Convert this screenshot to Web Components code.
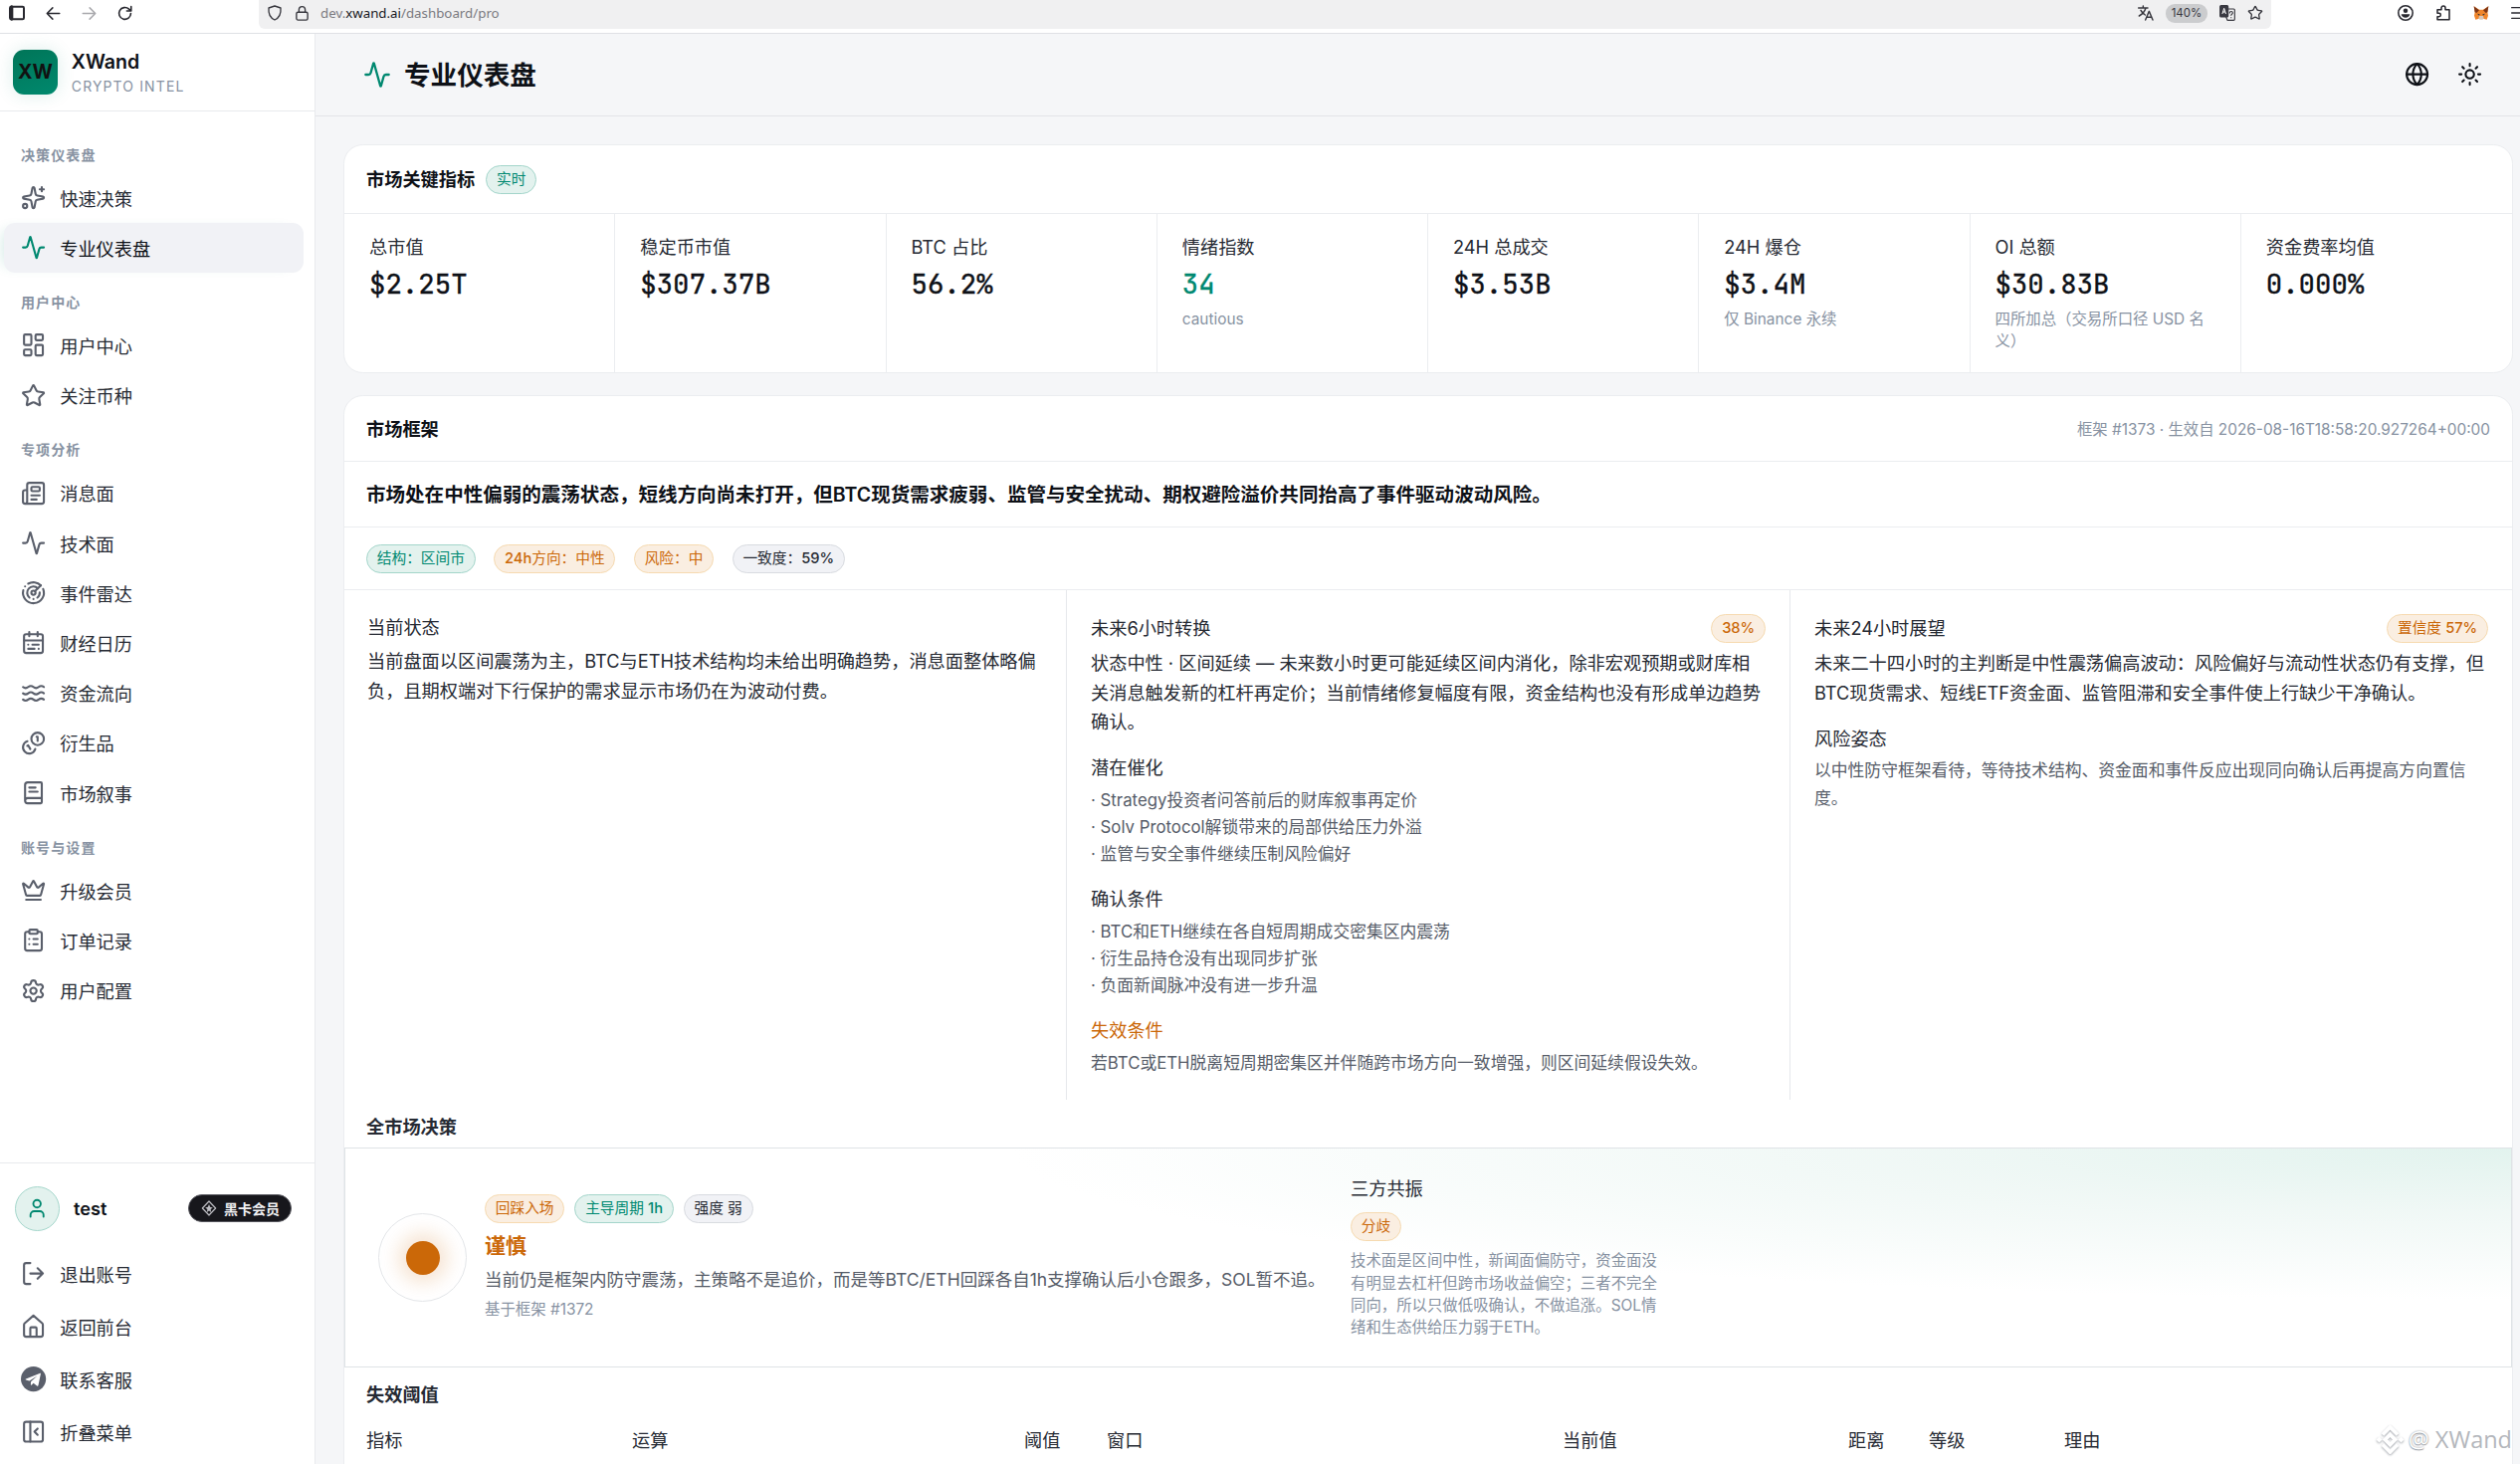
<!DOCTYPE html>
<html lang="zh-CN">
<head>
<meta charset="utf-8">
<title>XWand</title>
<style>
  html, body { margin: 0; height: 100%; overflow: hidden; }
  body {
    --teal: #008870;
    --orange: #cb6808;
    --line: #ebedf0;
    --muted: #8792a2;
    --soft: #565c68;
    --text: #262a33;
    --strong: #0e1117;
    font-family: Inter, "Noto Sans CJK SC", sans-serif;
    font-size: 18.2px;
    color: var(--text);
    background: #f5f6f8;
  }
</style>
</head>
<body>
<app-shell>
  <browser-bar slot="browser"></browser-bar>
  <side-bar slot="side">
    <nav-section label="决策仪表盘">
      <nav-item icon="sparkles">快速决策</nav-item>
      <nav-item icon="activity" active>专业仪表盘</nav-item>
    </nav-section>
    <nav-section label="用户中心">
      <nav-item icon="dashboard">用户中心</nav-item>
      <nav-item icon="star">关注币种</nav-item>
    </nav-section>
    <nav-section label="专项分析">
      <nav-item icon="news">消息面</nav-item>
      <nav-item icon="activity">技术面</nav-item>
      <nav-item icon="radar">事件雷达</nav-item>
      <nav-item icon="calendar">财经日历</nav-item>
      <nav-item icon="waves">资金流向</nav-item>
      <nav-item icon="coins">衍生品</nav-item>
      <nav-item icon="book">市场叙事</nav-item>
    </nav-section>
    <nav-section label="账号与设置">
      <nav-item icon="crown">升级会员</nav-item>
      <nav-item icon="clipboard">订单记录</nav-item>
      <nav-item icon="settings">用户配置</nav-item>
    </nav-section>
    <nav-item slot="foot" tall icon="logout">退出账号</nav-item>
    <nav-item slot="foot" tall icon="house">返回前台</nav-item>
    <nav-item slot="foot" tall icon="telegram">联系客服</nav-item>
    <nav-item slot="foot" tall icon="collapse">折叠菜单</nav-item>
  </side-bar>
  <page-header>专业仪表盘</page-header>
  <main-content></main-content>
</app-shell>

<script>
const icons = {
  sparkles: '<path d="M11.017 2.814a1 1 0 0 1 1.966 0l1.051 5.558a2 2 0 0 0 1.594 1.594l5.558 1.051a1 1 0 0 1 0 1.966l-5.558 1.051a2 2 0 0 0-1.594 1.594l-1.051 5.558a1 1 0 0 1-1.966 0l-1.051-5.558a2 2 0 0 0-1.594-1.594l-5.558-1.051a1 1 0 0 1 0-1.966l5.558-1.051a2 2 0 0 0 1.594-1.594z"/><path d="M20 2v4M22 4h-4"/><circle cx="4" cy="20" r="2"/>',
  activity: '<path d="M22 12h-2.48a2 2 0 0 0-1.93 1.46l-2.35 8.36a.25.25 0 0 1-.48 0L9.24 2.18a.25.25 0 0 0-.48 0l-2.35 8.36A2 2 0 0 1 4.49 12H2"/>',
  dashboard: '<rect x="3" y="2" width="7" height="10" rx="1"/><rect x="14" y="2" width="7" height="5.500" rx="1"/><rect x="14" y="12" width="7" height="10" rx="1"/><rect x="3" y="16.500" width="7" height="5.500" rx="1"/>',
  star: '<path d="M11.525 2.295a.53.53 0 0 1 .95 0l2.31 4.679a2.123 2.123 0 0 0 1.595 1.16l5.166.756a.53.53 0 0 1 .294.904l-3.736 3.638a2.123 2.123 0 0 0-.611 1.878l.882 5.14a.53.53 0 0 1-.771.56l-4.618-2.428a2.122 2.122 0 0 0-1.973 0L6.396 21.01a.53.53 0 0 1-.77-.56l.881-5.139a2.122 2.122 0 0 0-.611-1.879L2.16 9.795a.53.53 0 0 1 .294-.906l5.165-.755a2.122 2.122 0 0 0 1.597-1.16z"/>',
  news: '<path d="M15 18h-5M18 14h-8M4 22h16a2 2 0 0 0 2-2V4a2 2 0 0 0-2-2H8a2 2 0 0 0-2 2v16a2 2 0 0 1-4 0v-9a2 2 0 0 1 2-2h2"/><rect x="10" y="6" width="8" height="4" rx="1"/>',
  radar: '<path d="M19.07 4.93A10 10 0 0 0 6.99 3.34M4 6h.01M2.29 9.62A10 10 0 1 0 21.31 8.35M16.24 7.76A6 6 0 1 0 8.23 16.67M12 18h.01M17.99 11.66A6 6 0 0 1 15.77 16.67"/><circle cx="12" cy="12" r="2"/><path d="m13.41 10.59 5.66-5.66"/>',
  calendar: '<rect x="3" y="4" width="18" height="18" rx="2"/><path d="M16 2v4M3 10h18M8 2v4M17 14h-6M13 18H7M7 14h.01M17 18h.01"/>',
  waves: '<path d="M2 6c.6.5 1.2 1 2.5 1C7 7 7 5 9.5 5c2.6 0 2.4 2 5 2 2.5 0 2.5-2 5-2 1.3 0 1.9.5 2.5 1M2 12c.6.5 1.2 1 2.5 1 2.5 0 2.5-2 5-2 2.6 0 2.4 2 5 2 2.5 0 2.5-2 5-2 1.3 0 1.9.5 2.5 1M2 18c.6.5 1.2 1 2.5 1 2.5 0 2.5-2 5-2 2.6 0 2.4 2 5 2 2.5 0 2.5-2 5-2 1.3 0 1.9.5 2.5 1"/>',
  coins: '<path d="M13.744 17.736a6 6 0 1 1-7.48-7.48M15 6h1v4M6.134 14.768l.866-.5 2 3.464"/><circle cx="16" cy="8" r="6"/>',
  book: '<path d="M4 19.5v-15A2.5 2.5 0 0 1 6.5 2H19a1 1 0 0 1 1 1v18a1 1 0 0 1-1 1H6.5a1 1 0 0 1 0-5H20M8 11h8M8 7h6"/>',
  crown: '<path d="M11.562 3.266a.5.5 0 0 1 .876 0L15.39 8.87a1 1 0 0 0 1.516.294L21.183 5.5a.5.5 0 0 1 .798.519l-2.834 10.246a1 1 0 0 1-.956.734H5.81a1 1 0 0 1-.957-.734L2.02 6.02a.5.5 0 0 1 .798-.519l4.276 3.664a1 1 0 0 0 1.516-.294zM5 21h14"/>',
  clipboard: '<rect x="8" y="2" width="8" height="4" rx="1"/><path d="M16 4h2a2 2 0 0 1 2 2v14a2 2 0 0 1-2 2H6a2 2 0 0 1-2-2V6a2 2 0 0 1 2-2h2M12 11h4M12 16h4M8 11h.01M8 16h.01"/>',
  settings: '<path d="M9.671 4.136a2.34 2.34 0 0 1 4.659 0 2.34 2.34 0 0 0 3.319 1.915 2.34 2.34 0 0 1 2.33 4.033 2.34 2.34 0 0 0 0 3.831 2.34 2.34 0 0 1-2.33 4.033 2.34 2.34 0 0 0-3.319 1.915 2.34 2.34 0 0 1-4.659 0 2.34 2.34 0 0 0-3.32-1.915 2.34 2.34 0 0 1-2.33-4.033 2.34 2.34 0 0 0 0-3.831A2.34 2.34 0 0 1 6.35 6.051a2.34 2.34 0 0 0 3.319-1.915"/><circle cx="12" cy="12" r="3"/>',
  logout: '<path d="M9 22H5a2 2 0 0 1-2-2V4a2 2 0 0 1 2-2h4M16 17l5-5-5-5M21 12H9"/>',
  house: '<path d="M15 22v-8a1 1 0 0 0-1-1h-4a1 1 0 0 0-1 1v8M3 10.5a2 2 0 0 1 .7-1.5L12 1.8 20.3 9a2 2 0 0 1 .7 1.5V20a2 2 0 0 1-2 2H5a2 2 0 0 1-2-2z"/>',
  telegram: '<circle cx="12" cy="12" r="12" fill="currentColor" stroke="none"/><path d="M4.8 12 17.9 6.6c.7-.3 1.2.1 1 .9l-2.2 10.400c-.2.8-.7 1-1.300.6l-3.400-2.500-1.700 1.600c-.5.4-.9.3-.9-.4l.2-2.600 6-5.500-7.500 4.700-3.200-1c-.7-.2-.7-.6-.1-.8z" fill="#fff" stroke="none"/>',
  collapse: '<rect x="3" y="2.500" width="18" height="19" rx="2"/><path d="M9 2.500v19M16 15l-3-3 3-3"/>',
  user: '<path d="M19 21v-2a4 4 0 0 0-4-4H9a4 4 0 0 0-4 4v2"/><circle cx="12" cy="7" r="4"/>',
  globe: '<circle cx="12" cy="12" r="10"/><path d="M12 2a14.500 14.500 0 0 0 0 20 14.500 14.500 0 0 0 0-20M2 12h20"/>',
  sun: '<circle cx="12" cy="12" r="4"/><path d="M12 2v2M12 20v2M4.930 4.930l1.410 1.410M17.660 17.660l1.410 1.410M2 12h2M20 12h2M6.340 17.660l-1.410 1.410M19.070 4.930l-1.410 1.410"/>',
  gem: '<path d="M12 1.500 22 12 12 22.500 2 12z"/><path d="m12 6 1.700 4 4 1.200-3.200 2.400.6 4.400-3.100-2.300L8.900 18l.6-4.400-3.200-2.400 4-1.200z" fill="currentColor" stroke="none"/>',
  /* browser chrome */
  panel: '<rect x="1.500" y="2.500" width="21" height="19" rx="2" stroke-width="3"/><path d="M4 3v18" stroke-width="5"/>',
  back: '<path d="M22 12H2M11 3l-9 9 9 9"/>',
  forward: '<path d="M2 12h20M13 3l9 9-9 9"/>',
  reload: '<path d="M21.500 12a9.500 9.500 0 1 1-3-7L22 8M22 1v7h-7"/>',
  shield: '<path d="M12 1.500 21 4.500c.8 9-2.500 15-9 18-6.500-3-9.800-9-9-18z"/>',
  lock: '<rect x="3" y="10" width="18" height="12.500" rx="2.500"/><path d="M7 10V6a5 5 0 0 1 10 0v4"/>',
  translate: '<path d="M1 4.500h14M8 1.500v3M12 4.500c-1.500 5-5 9-10 12M4.500 8c1.500 3 3.500 5 6.500 7M11.500 22.500l5.500-13 5.500 13M13.500 18.500h7"/>',
  pages: '<rect x="1" y="1" width="12" height="17" rx="1.500" fill="#3a3a42"/><path d="m4.500 13 2.500-8 2.500 8M5.500 10.500h3" stroke="#fff" stroke-width="1.500"/><path d="M13 6h8.500a1.500 1.500 0 0 1 1.500 1.500v14a1.500 1.500 0 0 1-1.500 1.500H12l-2-5M15.500 12c0-3 4.500-3 4.500 0 0 1.800-2.300 1.800-2.300 3.500M17.700 19v.2"/>',
  account: '<circle cx="12" cy="12" r="10.800"/><circle cx="12" cy="8.700" r="3.400" fill="currentColor" stroke="none"/><path d="M5.500 14h13c-.5 3.500-3 5-6.500 5s-6-1.500-6.500-5z" fill="currentColor" stroke="none"/>',
  puzzle: '<path d="M3 22V17.500h2.500a2.500 2.500 0 0 0 0-5H3V7h6V4.500a3 3 0 0 1 6 0V7h6v15z"/>',
  menu: '<path d="M1 4h22M1 12h22M1 20h22"/>',
  fox: '<g stroke="none"><path d="M1 2l8 5h6l8-5-1.500 9 1 5-2 6-5.500-1.500h-6L3.500 22l-2-6 1-5z" fill="#f0852a"/><path d="M1 2l8 6-4 4-2.500-1zM23 2l-8 6 4 4 2.500-1z" fill="#7d3516"/><path d="M9 16.500h6l1 4-2 1.500h-4l-2-1.500z" fill="#d9c7b8"/><path d="M6 13l4 1-1 2zM18 13l-4 1 1 2z" fill="#30343b"/></g>'
};

class UiIcon extends HTMLElement {
  connectedCallback() {
    const size = this.getAttribute('size') || 25.2;
    const stroke = this.getAttribute('stroke') || 2;
    this.attachShadow({mode: 'open'}).innerHTML = `
    <style>
      :host { display: block; flex: none; width: ${size}px; height: ${size}px; }
      svg { display: block; overflow: visible; }
    </style>
    <svg width="${size}" height="${size}" viewBox="0 0 24 24" fill="none" stroke="currentColor"
      stroke-width="${stroke}" stroke-linecap="round" stroke-linejoin="round">${icons[this.getAttribute('name')]}</svg>`;
  }
}

class AppShell extends HTMLElement {
  constructor() {
    super();
    this.attachShadow({mode: 'open'}).innerHTML = `
    <style>
      :host { display: flex; flex-direction: column; height: 100vh; overflow: hidden; }
      .body { flex: 1; display: flex; min-height: 0; }
      .page { flex: 1; min-width: 0; display: flex; flex-direction: column; overflow: hidden; }
    </style>
    <slot name="browser"></slot>
    <div class="body">
      <slot name="side"></slot>
      <div class="page"><slot></slot></div>
    </div>`;
  }
}

class BrowserBar extends HTMLElement {
  constructor() {
    super();
    this.attachShadow({mode: 'open'}).innerHTML = `
    <style>
      :host {
        display: flex; height: 33px; flex: none; box-sizing: content-box;
        background: #fff; border-bottom: 1px solid #dfe1e5; color: #28282f;
        font: 13.3px "Noto Sans", "Open Sans", sans-serif;
      }
      .tools { display: flex; align-items: center; height: 26px; width: 251px; padding-left: 9px; }
      .tools ui-icon + ui-icon { margin-left: 21px; }
      .off { color: #a9a9ad; }
      .url {
        display: flex; align-items: center; width: 2022px; height: 29px; box-sizing: border-box;
        padding: 0 8px 3px 8px; background: #f0f0f1; border-radius: 0 0 6px 6px; color: #37373e;
      }
      .url .addr { margin-left: 11px; color: #7a7a80; }
      .addr b { font-weight: 400; color: #18181e; }
      .end { margin-left: auto; display: flex; align-items: center; gap: 12px; }
      .zoom {
        width: 42px; height: 19px; border-radius: 9px; text-align: center;
        background: #cbccce; font: 11.5px/19px Inter, sans-serif;
      }
      .ext { display: flex; align-items: center; height: 26px; gap: 22px; margin-left: 127px; width: 123px; overflow: hidden; }
    </style>
    <div class="tools">
      <ui-icon name="panel" size="16"></ui-icon>
      <ui-icon name="back" size="15" stroke="2.4"></ui-icon>
      <ui-icon name="forward" class="off" size="15" stroke="2.4"></ui-icon>
      <ui-icon name="reload" size="15" stroke="2.6"></ui-icon>
    </div>
    <div class="url">
      <ui-icon name="shield" size="16" stroke="2"></ui-icon>
      <ui-icon name="lock" size="15" stroke="2.2" style="margin-left:12px"></ui-icon>
      <span class="addr">dev.<b>xwand.ai</b>/dashboard/pro</span>
      <div class="end">
        <ui-icon name="translate" size="16" stroke="2.2"></ui-icon>
        <span class="zoom">140%</span>
        <ui-icon name="pages" size="16" stroke="1.700"></ui-icon>
        <ui-icon name="star" size="16" stroke="2"></ui-icon>
      </div>
    </div>
    <div class="ext">
      <ui-icon name="account" size="16" stroke="2.3"></ui-icon>
      <ui-icon name="puzzle" size="16" stroke="2.3"></ui-icon>
      <ui-icon name="fox" size="16"></ui-icon>
      <ui-icon name="menu" size="16" stroke="2"></ui-icon>
    </div>`;
  }
}

class SideBar extends HTMLElement {
  constructor() {
    super();
    this.attachShadow({mode: 'open'}).innerHTML = `
    <style>
      :host {
        display: flex; flex-direction: column; width: 316px; flex: none;
        background: #fff; border-right: 1px solid #e8eaed;
      }
      .brand {
        display: flex; align-items: center; gap: 14px; height: 78px; flex: none;
        padding: 0 13px; border-bottom: 1px solid #e8eaed; box-sizing: border-box;
      }
      .logo {
        width: 44.8px; height: 44.8px; border-radius: 11px; text-align: center;
        font: 700 19.600px/45px Inter, sans-serif; color: #111;
        background: linear-gradient(160deg, #007558, #00896e);
        box-shadow: 0 0 18px rgba(0, 136, 112, .14);
      }
      .name { padding-top: 2px; font-weight: 600; font-size: 19.6px; line-height: 26px; color: var(--strong); }
      .sub { font-size: 14px; line-height: 23px; letter-spacing: 1.12px; color: #8792a2; }
      nav { flex: 1; padding: 25.6px 11px 0 4px; }
      .foot { border-top: 1px solid #e8eaed; height: 303px; box-sizing: border-box; padding: 17px 12px 0 4px; }
      .me { display: flex; align-items: center; height: 56px; margin-bottom: 11px; padding: 0 11px; }
      .avatar {
        width: 45px; height: 45px; box-sizing: border-box; border: 1px solid #a5d7cc; border-radius: 50%;
        background: #e3f2ee; color: var(--teal); display: grid; place-items: center;
      }
      .who { margin-left: 14px; font-weight: 600; font-size: 18.2px; color: var(--strong); }
      .tier {
        margin-left: auto; display: flex; align-items: center; gap: 7px; height: 28px; width: 104px;
        box-sizing: border-box; border: 1px solid #55555c; padding: 0 12px; border-radius: 14px;
        background: #17171c; color: #f1f1f3; font-size: 14px; font-weight: 600; white-space: nowrap;
      }
      .tier ui-icon { color: #bdbdc3; }
    </style>
    <div class="brand">
      <div class="logo">XW</div>
      <div><div class="name">XWand</div><div class="sub">CRYPTO INTEL</div></div>
    </div>
    <nav><slot></slot></nav>
    <div class="foot">
      <div class="me">
        <div class="avatar"><ui-icon name="user" size="22.4"></ui-icon></div>
        <span class="who">test</span>
        <span class="tier"><ui-icon name="gem" size="16" stroke="1.800"></ui-icon>黑卡会员</span>
      </div>
      <slot name="foot"></slot>
    </div>`;
  }
}

class NavSection extends HTMLElement {
  constructor() {
    super();
    this.attachShadow({mode: 'open'});
  }
  connectedCallback() {
    this.shadowRoot.innerHTML = `
    <style>
      :host { display: block; margin-bottom: 12px; }
      .label {
        height: 36px; line-height: 36px; padding-left: 17px; font-size: 14px;
        font-weight: 600; letter-spacing: 1.12px; color: var(--muted);
      }
    </style>
    <div class="label">${this.getAttribute('label')}</div>
    <slot></slot>`;
  }
}

class NavItem extends HTMLElement {
  constructor() {
    super();
    this.attachShadow({mode: 'open'});
  }
  connectedCallback() {
    this.shadowRoot.innerHTML = `
    <style>
      :host {
        display: flex; align-items: center; gap: 14px; height: 50.2px; padding-left: 17px;
        border-radius: 11px; color: var(--text);
      }
      :host([tall]) { height: 53px; }
      ui-icon { color: #5a5f6b; }
      :host([active]) { background: #f1f2f6; color: var(--strong); box-shadow: -8px 0 14px -8px rgba(0, 136, 112, .2); }
      :host([active]) ui-icon { color: var(--teal); }
    </style>
    <ui-icon name="${this.getAttribute('icon')}"></ui-icon>
    <slot></slot>`;
  }
}

class PageHeader extends HTMLElement {
  constructor() {
    super();
    this.attachShadow({mode: 'open'}).innerHTML = `
    <style>
      :host {
        display: flex; align-items: center; height: 83px; flex: none; box-sizing: border-box;
        padding: 0 37.5px 0 48px; border-bottom: 1px solid #e2e4e8; color: var(--strong);
      }
      h1 { margin: 0 auto 0 13px; font-size: 26.6px; font-weight: 600; line-height: 40px; }
      .mark { color: var(--teal); }
      .actions { display: flex; gap: 28px; }
    </style>
    <ui-icon class="mark" name="activity" size="28"></ui-icon>
    <h1><slot></slot></h1>
    <div class="actions">
      <ui-icon name="globe"></ui-icon>
      <ui-icon name="sun"></ui-icon>
    </div>`;
  }
}

class StatusChip extends HTMLElement {
  constructor() {
    super();
    this.attachShadow({mode: 'open'}).innerHTML = `
    <style>
      :host {
        display: inline-block; flex: none; box-sizing: border-box; height: 29px; padding: 0 9.8px;
        border: 1px solid #d8dbe0; border-radius: 15px; background: #f1f2f6; color: var(--text);
        font-size: 14.7px; font-weight: 400; line-height: 27px; white-space: nowrap;
      }
      :host([tone="teal"]) { background: #e3f2ee; border-color: #a3d5ca; color: var(--teal); }
      :host([tone="orange"]) { background: #faeee1; border-color: #f6dab0; color: var(--orange); }
      ::slotted(b) { font-weight: 500; }
    </style>
    <slot></slot>`;
  }
}

class StatCell extends HTMLElement {
  constructor() {
    super();
    this.attachShadow({mode: 'open'});
  }
  connectedCallback() {
    this.shadowRoot.innerHTML = `
    <style>
      :host { display: block; padding: 20px 23px 0 25px; border-right: 1px solid var(--line); box-sizing: border-box; }
      :host(:last-child) { border-right: 0; }
      .label { line-height: 27px; }
      .value {
        font: 400 27.4px/36px "JetBrains Mono", "DejaVu Sans Mono", monospace;
        -webkit-text-stroke: .4px; color: var(--strong); margin-top: 5px;
      }
      :host([tone]) .value { color: var(--teal); }
      .note { margin-top: 7px; font-size: 15.4px; line-height: 22.4px; color: var(--muted); }
    </style>
    <div class="label">${this.getAttribute('label')}</div>
    <div class="value">${this.getAttribute('value')}</div>
    <div class="note"><slot></slot></div>`;
  }
}

class PanelCard extends HTMLElement {
  constructor() {
    super();
    this.attachShadow({mode: 'open'}).innerHTML = `
    <style>
      :host {
        display: block; flex: none; box-sizing: border-box; background: #fff;
        border: 1px solid var(--line); border-radius: 19.6px; overflow: hidden;
      }
      header {
        display: flex; align-items: center; height: var(--head, 69px); box-sizing: border-box;
        padding: 0 22px; border-bottom: 1px solid var(--line);
      }
      h2 { margin: 0 11px 2px 0; font-size: 18.2px; font-weight: 600; color: var(--strong); }
    </style>
    <header><h2><slot name="title"></slot></h2><slot name="extra"></slot></header>
    <slot></slot>`;
  }
}

class OutlookColumn extends HTMLElement {
  constructor() {
    super();
    this.attachShadow({mode: 'open'}).innerHTML = `
    <style>
      :host {
        display: block; box-sizing: border-box; padding: 24px 24px 0; height: 512px;
        border-left: 1px solid #e6e8eb;
      }
      :host(:first-child) { border-left: 0; padding-left: 23px; }
      .head { display: flex; align-items: center; justify-content: space-between; min-height: 27px; line-height: 27px; }
      ::slotted(p) { margin: 6px 0 0; line-height: 29.6px; }
      ::slotted(h4) { margin: 17.400px 0 5.800px; font-size: 18.2px; font-weight: 400; line-height: 27px; }
      ::slotted(h4[warn]) { color: var(--orange); }
      ::slotted(div) { font-size: 16.8px; line-height: 27.200px; color: var(--soft); }
    </style>
    <div class="head"><slot name="title"></slot><slot name="chip"></slot></div>
    <slot></slot>`;
  }
}

class DecisionPanel extends HTMLElement {
  constructor() {
    super();
    this.attachShadow({mode: 'open'}).innerHTML = `
    <style>
      :host {
        display: flex; align-items: center; height: 221px; box-sizing: border-box; padding-left: 33px;
        border: 1px solid #dfe3e6;
        background: radial-gradient(ellipse at 100% 0, #e2f3ee, rgba(236, 246, 243, .8) 20%, rgba(255, 255, 255, 0) 49%);
      }
      .orb {
        width: 89px; height: 89px; box-sizing: border-box; border: 1px solid #e3e5e8; border-radius: 50%;
        display: grid; place-items: center; background: #fff; flex: none;
      }
      .orb i { width: 34px; height: 34px; border-radius: 50%; background: var(--orange); box-shadow: 0 0 20px 7px rgba(203, 104, 8, .2); }
      .call { width: 852px; margin-left: 18px; }
      .chips { display: flex; gap: 10px; }
      .title { margin-top: 7px; font-size: 21px; font-weight: 600; line-height: 32px; color: var(--orange); }
      .text { margin-top: 4px; font-size: 17.5px; line-height: 28px; color: var(--soft); white-space: nowrap; }
      .base { margin-top: 5px; font-size: 15.4px; line-height: 22px; color: var(--muted); }
      .sync { margin-left: 18px; width: 312px; }
      .sync h4 { margin: 0 0 10px; font-size: 18.2px; font-weight: 400; line-height: 27px; }
      .sync p { margin: 9px 0 0; font-size: 15.4px; line-height: 22.300px; color: var(--muted); }
      .sync status-chip { display: block; width: fit-content; }
    </style>
    <div class="orb"><i></i></div>
    <div class="call">
      <div class="chips">
        <status-chip tone="orange">回踩入场</status-chip>
        <status-chip tone="teal">主导周期 <b>1h</b></status-chip>
        <status-chip>强度 弱</status-chip>
      </div>
      <div class="title">谨慎</div>
      <div class="text">当前仍是框架内防守震荡，主策略不是追价，而是等BTC/ETH回踩各自1h支撑确认后小仓跟多，SOL暂不追。</div>
      <div class="base">基于框架 #1372</div>
    </div>
    <div class="sync">
      <h4>三方共振</h4>
      <status-chip tone="orange">分歧</status-chip>
      <p>技术面是区间中性，新闻面偏防守，资金面没有明显去杠杆但跨市场收益偏空；三者不完全同向，所以只做低吸确认，不做追涨。SOL情绪和生态供给压力弱于ETH。</p>
    </div>`;
  }
}

class WaterMark extends HTMLElement {
  constructor() {
    super();
    this.attachShadow({mode: 'open'}).innerHTML = `
    <style>
      :host {
        position: absolute; right: 8px; bottom: 9px; display: flex; align-items: center; gap: 4px;
        font: 23.5px/32px "Open Sans", "Noto Sans", sans-serif; color: #b4b7bc; white-space: nowrap;
      }
      svg { filter: drop-shadow(0 1px 1px #a4a8ae); }
      .at { color: #fff; text-shadow: 0 0 2px #84888f, 0 1px 1px #a4a8ae; }
    </style>
    <svg width="29" height="29" viewBox="0 0 29 29" fill="none" stroke="#fff" stroke-width="3.800">
      <path d="M7 9.500 14.500 2 22 9.500M7 19.500l7.500 7.500 7.500-7.500M14.500 9.500l5 5-5 5-5-5z"/>
      <path d="M3.500 11.500l3 3-3 3-3-3zM25.500 11.500l3 3-3 3-3-3z" fill="#fff" stroke="none"/>
    </svg>
    <span><span class="at">@</span> XWand</span>`;
  }
}

class MainContent extends HTMLElement {
  constructor() {
    super();
    this.attachShadow({mode: 'open'}).innerHTML = `
    <style>
      :host { display: flex; flex-direction: column; gap: 22px; padding: 28px 7px 0 28px; }
      .stats { display: grid; grid-template-columns: repeat(8, 1fr); height: 159px; }
      .stamp { margin: 0 0 2px auto; font-size: 15.36px; color: var(--muted); }
      .frame { --head: 66px; height: 1120px; }
      .lead {
        height: 66px; box-sizing: border-box; padding: 0 22px; line-height: 66px;
        border-bottom: 1px solid var(--line); font-size: 19.55px; font-weight: 600; color: var(--strong);
      }
      .chips { display: flex; align-items: center; gap: 18.4px; height: 63px; box-sizing: border-box; padding: 0 22px; border-bottom: 1px solid var(--line); }
      .cols { display: grid; grid-template-columns: 725px 727px 1fr; }
      h3 { margin: 0; height: 48px; box-sizing: border-box; padding: 7px 22px 0; font-size: 18.2px; font-weight: 600; line-height: 41px; }
      .table { display: grid; grid-template-columns: 267px 394px 83px 458px 287px 81px 136px 1fr; padding-left: 22px; line-height: 50px; }
    </style>
    <panel-card>
      <span slot="title">市场关键指标</span>
      <status-chip slot="extra" tone="teal">实时</status-chip>
      <div class="stats">
        <stat-cell label="总市值" value="$2.25T"></stat-cell>
        <stat-cell label="稳定币市值" value="$307.37B"></stat-cell>
        <stat-cell label="BTC 占比" value="56.2%"></stat-cell>
        <stat-cell label="情绪指数" value="34" tone="teal">cautious</stat-cell>
        <stat-cell label="24H 总成交" value="$3.53B"></stat-cell>
        <stat-cell label="24H 爆仓" value="$3.4M">仅 Binance 永续</stat-cell>
        <stat-cell label="OI 总额" value="$30.83B">四所加总（交易所口径 USD 名义）</stat-cell>
        <stat-cell label="资金费率均值" value="0.000%"></stat-cell>
      </div>
    </panel-card>
    <panel-card class="frame">
      <span slot="title">市场框架</span>
      <span slot="extra" class="stamp">框架 #1373 · 生效自 2026-08-16T18:58:20.927264+00:00</span>
      <div class="lead">市场处在中性偏弱的震荡状态，短线方向尚未打开，但BTC现货需求疲弱、监管与安全扰动、期权避险溢价共同抬高了事件驱动波动风险。</div>
      <div class="chips">
        <status-chip tone="teal">结构：区间市</status-chip>
        <status-chip tone="orange"><b>24h</b>方向：中性</status-chip>
        <status-chip tone="orange">风险：中</status-chip>
        <status-chip>一致度：<b>59%</b></status-chip>
      </div>
      <div class="cols">
        <outlook-column>
          <span slot="title">当前状态</span>
          <p>当前盘面以区间震荡为主，BTC与ETH技术结构均未给出明确趋势，消息面整体略偏负，且期权端对下行保护的需求显示市场仍在为波动付费。</p>
        </outlook-column>
        <outlook-column>
          <span slot="title">未来6小时转换</span>
          <status-chip slot="chip" tone="orange"><b>38%</b></status-chip>
          <p>状态中性 · 区间延续 — 未来数小时更可能延续区间内消化，除非宏观预期或财库相关消息触发新的杠杆再定价；当前情绪修复幅度有限，资金结构也没有形成单边趋势确认。</p>
          <h4>潜在催化</h4>
          <div>· Strategy投资者问答前后的财库叙事再定价</div>
          <div>· Solv Protocol解锁带来的局部供给压力外溢</div>
          <div>· 监管与安全事件继续压制风险偏好</div>
          <h4>确认条件</h4>
          <div>· BTC和ETH继续在各自短周期成交密集区内震荡</div>
          <div>· 衍生品持仓没有出现同步扩张</div>
          <div>· 负面新闻脉冲没有进一步升温</div>
          <h4 warn>失效条件</h4>
          <div>若BTC或ETH脱离短周期密集区并伴随跨市场方向一致增强，则区间延续假设失效。</div>
        </outlook-column>
        <outlook-column>
          <span slot="title">未来24小时展望</span>
          <status-chip slot="chip" tone="orange">置信度 <b>57%</b></status-chip>
          <p>未来二十四小时的主判断是中性震荡偏高波动：风险偏好与流动性状态仍有支撑，但BTC现货需求、短线ETF资金面、监管阻滞和安全事件使上行缺少干净确认。</p>
          <h4>风险姿态</h4>
          <div>以中性防守框架看待，等待技术结构、资金面和事件反应出现同向确认后再提高方向置信度。</div>
        </outlook-column>
      </div>
      <h3>全市场决策</h3>
      <decision-panel></decision-panel>
      <h3>失效阈值</h3>
      <div class="table">
        <span>指标</span><span>运算</span><span>阈值</span><span>窗口</span>
        <span>当前值</span><span>距离</span><span>等级</span><span>理由</span>
      </div>
    </panel-card>
    <water-mark></water-mark>`;
  }
}

customElements.define('ui-icon', UiIcon);
customElements.define('app-shell', AppShell);
customElements.define('browser-bar', BrowserBar);
customElements.define('side-bar', SideBar);
customElements.define('nav-section', NavSection);
customElements.define('nav-item', NavItem);
customElements.define('page-header', PageHeader);
customElements.define('status-chip', StatusChip);
customElements.define('stat-cell', StatCell);
customElements.define('panel-card', PanelCard);
customElements.define('outlook-column', OutlookColumn);
customElements.define('decision-panel', DecisionPanel);
customElements.define('water-mark', WaterMark);
customElements.define('main-content', MainContent);
</script>
</body>
</html>
